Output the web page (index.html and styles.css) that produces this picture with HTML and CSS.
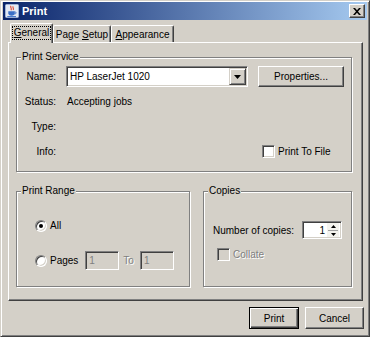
FILE: index.html
```html
<!DOCTYPE html>
<html lang="en">
<head>
<meta charset="utf-8">
<title>Print</title>
<link rel="stylesheet" href="styles.css">
</head>
<body>
<div class="window">
  <div class="titlebar">
    <svg class="app-icon" width="14" height="14" viewBox="0 0 14 14">
      <rect x="0.5" y="0.5" width="13" height="13" rx="1" fill="#e4e9f4" stroke="#9fb2d6"/>
      <path d="M6 1.8 C4.6 3.3 7.4 4.3 6 6.3 M8.2 2.4 C7.2 3.8 9.2 4.4 8.2 6" stroke="#e2452c" fill="none" stroke-width="1.1"/>
      <path d="M3.3 7.3 H9.8 V9.3 C9.8 10.9 8.4 11.8 6.6 11.8 C4.8 11.8 3.3 10.9 3.3 9.3 Z" fill="#3b6fc6"/>
      <path d="M9.8 7.8 C11.5 7.8 11.5 10 9.6 10" stroke="#3b6fc6" fill="none"/>
      <path d="M2.3 12.6 H11" stroke="#3b6fc6"/>
    </svg>
    <span class="title">Print</span>
    <span class="close">
      <svg width="8" height="7" viewBox="0 0 8 7"><path d="M0 0h2l2 2.3L6 0h2L5 3.5 8 7H6L4 4.7 2 7H0l3-3.5z" fill="#000"/></svg>
    </span>
  </div>

  <div class="tabs">
    <div class="tab selected"><span class="focus"><u>G</u>eneral</span></div>
    <div class="tab tab-page"><span>Page <u>S</u>etup</span></div>
    <div class="tab tab-appear"><span><u>A</u>ppearance</span></div>
  </div>

  <div class="panel">
    <div class="group service">
      <span class="group-title">Print Service</span>
      <div class="row">
        <span class="lbl">Name:</span>
        <div class="combo">
          <span class="combo-text">HP LaserJet 1020</span>
          <span class="combo-btn"><svg width="7" height="4" viewBox="0 0 7 4"><path d="M0 0h7L3.5 4z" fill="#000"/></svg></span>
        </div>
        <span class="btn props">Properties...</span>
      </div>
      <div class="row">
        <span class="lbl">Status:</span>
        <span class="val">Accepting jobs</span>
      </div>
      <div class="row">
        <span class="lbl">Type:</span>
      </div>
      <div class="row">
        <span class="lbl">Info:</span>
        <span class="check file-check"><span class="box"></span>Print To File</span>
      </div>
    </div>

    <div class="groups">
      <div class="group range">
        <span class="group-title">Print Range</span>
        <div class="radio-row">
          <span class="radio"><span class="dot"></span></span>
          <span>All</span>
        </div>
        <div class="radio-row pages-row">
          <span class="radio"></span>
          <span>Pages</span>
          <span class="field field-from">1</span>
          <span class="to disabled">To</span>
          <span class="field">1</span>
        </div>
      </div>
      <div class="group copies">
        <span class="group-title">Copies</span>
        <div class="copies-row">
          <span class="copies-lbl">Number of copies:</span>
          <span class="spinner">
            <span class="spin-val">1</span>
            <span class="spin-btns">
              <svg width="5" height="3" viewBox="0 0 5 3"><path d="M2.5 0L5 3H0z" fill="#000"/></svg>
              <span class="spin-sep"></span>
              <svg width="5" height="3" viewBox="0 0 5 3"><path d="M0 0h5L2.5 3z" fill="#000"/></svg>
            </span>
          </span>
        </div>
        <div class="collate-row">
          <span class="box box-disabled"></span>
          <span class="disabled">Collate</span>
        </div>
      </div>
    </div>
  </div>

  <div class="buttons">
    <span class="btn default print-btn">Print</span>
    <span class="btn cancel-btn">Cancel</span>
  </div>
</div>
</body>
</html>
```

FILE: styles.css
```css
html, body {
  margin: 0;
  padding: 0;
  background: #d4d0c8;
}

body {
  font-family: "Liberation Sans", Arial, sans-serif;
  font-size: 10px;
  color: #000;
}

.window {
  box-sizing: border-box;
  width: 370px;
  height: 337px;
  background: #d4d0c8;
  border: 1px solid;
  border-color: #d4d0c8 #404040 #404040 #d4d0c8;
  box-shadow: inset 1px 1px 0 #fff, inset -1px -1px 0 #808080;
  padding: 1px 2px 2px 2px;
}

/* title bar */
.titlebar {
  height: 18px;
  display: flex;
  align-items: center;
  background: linear-gradient(to right, #0a246a, #a6caf0);
  padding-left: 2px;
}

.app-icon {
  flex: none;
  margin-right: 3px;
}

.title {
  color: #fff;
  font-weight: bold;
  font-size: 11px;
  flex: 1;
}

.close {
  box-sizing: border-box;
  width: 16px;
  height: 14px;
  margin-right: 2px;
  display: flex;
  align-items: center;
  justify-content: center;
  background: #d4d0c8;
  border: 1px solid;
  border-color: #fff #404040 #404040 #fff;
  box-shadow: inset -1px -1px 0 #808080;
}

/* tabs */
.tabs {
  height: 19px;
  margin-top: 3px;
  margin-left: 7px;
  display: flex;
  align-items: flex-end;
}

.tab {
  box-sizing: border-box;
  height: 17px;
  display: flex;
  align-items: center;
  justify-content: center;
  border: 1px solid;
  border-bottom: none;
  border-color: #fff #404040 #404040 #fff;
  box-shadow: inset -1px 0 0 #808080;
  border-radius: 2px 2px 0 0;
  background: #d4d0c8;
  white-space: nowrap;
}

.tab.selected {
  position: relative;
  z-index: 1;
  width: 43px;
  height: 20px;
  margin-bottom: -1px;
  padding-bottom: 2px;
}

.tab-page {
  width: 58px;
}

.tab-appear {
  width: 63px;
}

.focus {
  outline: 1px dotted #000;
  outline-offset: 0;
  padding: 0 1px;
  line-height: 12px;
}

u {
  text-decoration: underline;
  text-underline-offset: 1px;
}

/* panel */
.panel {
  box-sizing: border-box;
  width: 355px;
  height: 259px;
  margin-left: 5px;
  border: 1px solid;
  border-color: #fff #404040 #404040 #fff;
  box-shadow: inset -1px -1px 0 #808080;
  padding: 14px 0 0 7px;
}

.group {
  position: relative;
  box-sizing: border-box;
  border: 1px solid #808080;
  box-shadow: inset 1px 1px 0 #fff, 1px 1px 0 #fff;
}

.group-title {
  position: absolute;
  left: 4px;
  top: -7px;
  padding: 0 1px;
  line-height: 12px;
  background: #d4d0c8;
}

.service {
  width: 336px;
  height: 115px;
  padding-top: 8px;
}

.row {
  display: flex;
  align-items: center;
  height: 21px;
  margin-bottom: 4px;
}

.lbl {
  flex: none;
  width: 39px;
  text-align: right;
  margin-right: 10px;
}

.val {
  padding-left: 1px;
}

.combo {
  box-sizing: border-box;
  width: 182px;
  height: 21px;
  display: flex;
  align-items: center;
  background: #fff;
  border: 1px solid;
  border-color: #808080 #fff #fff #808080;
  box-shadow: inset 1px 1px 0 #404040, inset -1px -1px 0 #d4d0c8;
  padding: 1px;
}

.combo-text {
  flex: 1;
  padding-left: 2px;
}

.combo-btn {
  box-sizing: border-box;
  width: 17px;
  height: 17px;
  display: flex;
  align-items: center;
  justify-content: center;
  background: #d4d0c8;
  border: 1px solid;
  border-color: #d4d0c8 #404040 #404040 #d4d0c8;
  box-shadow: inset 1px 1px 0 #fff, inset -1px -1px 0 #808080;
}

.btn {
  box-sizing: border-box;
  display: flex;
  align-items: center;
  justify-content: center;
  background: #d4d0c8;
  border: 1px solid;
  border-color: #fff #404040 #404040 #fff;
  box-shadow: inset -1px -1px 0 #808080;
}

.props {
  width: 86px;
  height: 21px;
  margin-left: 10px;
}

.check {
  display: flex;
  align-items: center;
}

.file-check {
  margin-left: 196px;
}

.box {
  box-sizing: border-box;
  flex: none;
  width: 13px;
  height: 13px;
  margin-right: 3px;
  background: #fff;
  border: 1px solid;
  border-color: #808080 #fff #fff #808080;
  box-shadow: inset 1px 1px 0 #404040, inset -1px -1px 0 #d4d0c8;
}

.box-disabled {
  background: #d4d0c8;
}

/* lower groups */
.groups {
  display: flex;
  gap: 13px;
  margin-top: 19px;
}

.range {
  width: 174px;
  height: 96px;
  padding: 24px 0 0 18px;
}

.copies {
  width: 149px;
  height: 96px;
  padding: 29px 0 0 9px;
}

.radio-row {
  display: flex;
  align-items: center;
  height: 19px;
}

.pages-row {
  margin-top: 16px;
}

.radio {
  box-sizing: border-box;
  flex: none;
  width: 12px;
  height: 12px;
  margin-right: 3px;
  border-radius: 50%;
  background: #fff;
  border: 1px solid;
  border-color: #808080 #fff #fff #808080;
  box-shadow: inset 1px 1px 0 #404040, inset -1px -1px 0 #d4d0c8;
  display: flex;
  align-items: center;
  justify-content: center;
}

.dot {
  width: 4px;
  height: 4px;
  border-radius: 50%;
  background: #000;
}

.field {
  box-sizing: border-box;
  width: 34px;
  height: 19px;
  display: flex;
  align-items: center;
  padding-left: 3px;
  color: #808080;
  background: #d4d0c8;
  border: 1px solid;
  border-color: #808080 #fff #fff #808080;
  box-shadow: inset 1px 1px 0 #404040, inset -1px -1px 0 #d4d0c8;
}

.field-from {
  margin-left: 7px;
}

.disabled {
  color: #808080;
  text-shadow: 1px 1px 0 #fff;
}

.to {
  margin: 0 6px 0 4px;
}

.copies-row {
  display: flex;
  align-items: center;
  height: 18px;
}

.copies-lbl {
  width: 89px;
  flex: none;
}

.spinner {
  box-sizing: border-box;
  width: 40px;
  height: 18px;
  display: flex;
  align-items: center;
  background: #fff;
  border: 1px solid;
  border-color: #808080 #fff #fff #808080;
  box-shadow: inset 1px 1px 0 #404040, inset -1px -1px 0 #d4d0c8;
  padding: 1px 2px 1px 1px;
}

.spin-val {
  flex: 1;
  text-align: right;
  padding-right: 2px;
}

.spin-btns {
  width: 12px;
  height: 14px;
  display: flex;
  flex-direction: column;
  align-items: center;
  justify-content: center;
  gap: 2px;
  background: #f4f3ee;
}

.spin-sep {
  width: 10px;
  height: 1px;
  background: #a0a0a0;
}

.collate-row {
  display: flex;
  align-items: center;
  height: 13px;
  margin-top: 9px;
  padding-left: 4px;
}

/* bottom buttons */
.buttons {
  display: flex;
  justify-content: flex-end;
  gap: 6px;
  margin-top: 6px;
  padding-right: 3px;
}

.print-btn {
  width: 50px;
  height: 22px;
}

.cancel-btn {
  width: 59px;
  height: 22px;
}

.btn.default {
  border-color: #000;
  box-shadow: inset 1px 1px 0 #fff, inset -1px -1px 0 #404040, inset -2px -2px 0 #808080;
}
```
